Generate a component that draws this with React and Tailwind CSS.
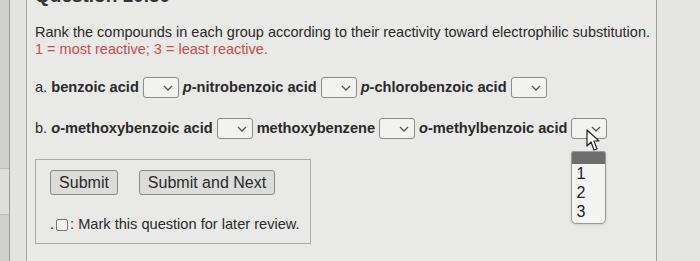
import React from "react";

function Sel({ open }) {
  return (
    <span className="relative inline-flex h-[21px] w-[36px] shrink-0 items-center justify-end rounded-[3px] border border-[#8c8c8c] bg-[#f2f2f0] pr-[4px] align-middle mx-[4px]">
      <svg width="10" height="6" viewBox="0 0 10 6" className="mr-[1px]">
        <path d="M1 1 L5 5 L9 1" fill="none" stroke="#555" strokeWidth="1.3" />
      </svg>
      {open && (
        <>
          <span className="absolute left-[-1px] top-[32px] z-10 flex w-[35px] flex-col overflow-hidden rounded-b-[5px] rounded-t-[2px] border border-[#9a9a9a] bg-[#f4f4f2] shadow-sm">
            <span className="h-[12px] bg-[#6e6e6e]" />
            <span className="flex flex-col pl-[4px] pb-[2px] text-[16px] leading-[19px] text-[#222]">
              <span>1</span>
              <span>2</span>
              <span>3</span>
            </span>
          </span>
          <svg className="absolute left-[14px] top-[10px] z-20" width="14" height="23" viewBox="0 0 14 23">
            <path d="M1 1 L1 17 L5 13 L8 21 L11 20 L8 12 L13 12 Z" fill="#fff" stroke="#222" strokeWidth="1.2" strokeLinejoin="round" />
          </svg>
        </>
      )}
    </span>
  );
}

export default function App() {
  return (
    <div className="h-[261px] w-[700px] overflow-hidden bg-[#e9e9e7] text-[#2a2a2a]" style={{ fontFamily: '"Liberation Sans", Arial, sans-serif' }}>
      <div className="flex h-full">
        <div className="flex w-[10px] flex-col border-r border-[#9a9a9a] bg-[#cfcfcd]">
          <div className="h-[168px]" />
          <div className="h-[47px] bg-[#dededc] border-y border-[#bdbdbd]" />
        </div>
        <div className="w-[17px] border-r border-[#a5a5a5] bg-[#e3e3e1]" />
        <div className="flex w-[630px] flex-col border-r border-[#9e9e9e] pl-[8px]">
          <div className="mt-[-14px] text-[19px] font-bold leading-[20px] text-[#333]">Question 10.30</div>
          <div className="mt-[18px] whitespace-nowrap text-[14.5px] leading-[17px]">
            Rank the compounds in each group according to their reactivity toward electrophilic substitution.
          </div>
          <div className="text-[14.5px] leading-[17px] text-[#cf4b4c]">1 = most reactive; 3 = least reactive.</div>

          <div className="mt-[19px] flex items-center whitespace-nowrap text-[14.6px]">
            <span>a.&nbsp;</span>
            <b>benzoic acid</b>
            <Sel />
            <b><i>p</i>-nitrobenzoic acid</b>
            <Sel />
            <b><i>p</i>-chlorobenzoic acid</b>
            <Sel />
          </div>

          <div className="mt-[19px] flex items-center whitespace-nowrap text-[14.6px]">
            <span>b.&nbsp;</span>
            <b><i>o</i>-methoxybenzoic acid</b>
            <Sel />
            <b>methoxybenzene</b>
            <Sel />
            <b><i>o</i>-methylbenzoic acid</b>
            <Sel open />
          </div>

          <div className="mt-[19px] flex h-[85px] w-[276px] flex-col border border-[#a9a9a9] pl-[14px] pt-[10px]">
            <div className="flex gap-[21px]">
              <button className="h-[25px] w-[68px] rounded-[3px] border border-[#8a8a8a] bg-[#dcdcda] text-[16px] text-[#2a2a2a]">Submit</button>
              <button className="h-[25px] w-[136px] rounded-[3px] border border-[#8a8a8a] bg-[#dcdcda] text-[16px] text-[#2a2a2a]">Submit and Next</button>
            </div>
            <div className="mt-[19px] flex items-center whitespace-nowrap text-[14.6px]">
              <span>.</span>
              <span className="mx-[2px] inline-block h-[12px] w-[12px] shrink-0 rounded-[2px] border border-[#777] bg-[#f4f4f2]" />
              <span>: Mark this question for later review.</span>
            </div>
          </div>
        </div>
        <div className="flex-1 bg-[#e5e5e3]" />
      </div>
    </div>
  );
}
